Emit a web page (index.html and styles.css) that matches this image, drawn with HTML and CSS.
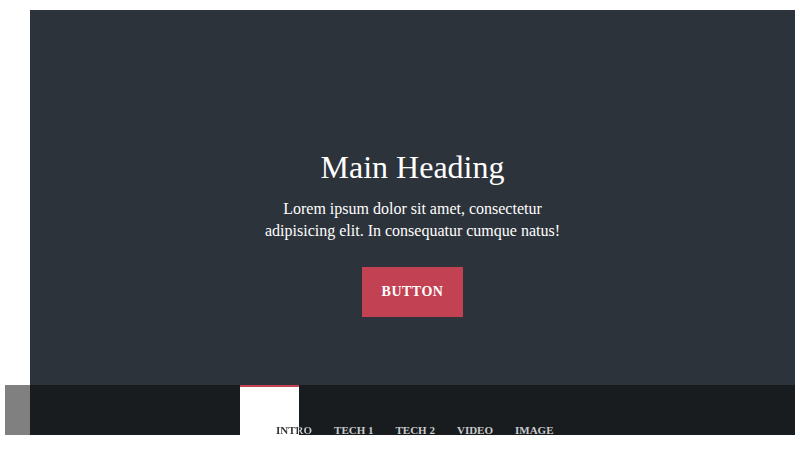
FILE: index.html
```html
<!DOCTYPE html>
<html lang="en">

<head>
    <meta charset="UTF-8">
    <meta name="viewport" content="width=device-width, initial-scale=1.0">
    <title>Main Heading</title>
    <link rel="stylesheet" href="styles.css">
</head>

<body>
    <div class="page">
        <section class="hero">
            <h1>Main Heading</h1>
            <p>Lorem ipsum dolor sit amet, consectetur adipisicing elit. In consequatur cumque natus!</p>
            <a class="btn" href="#">Button</a>
        </section>

        <nav class="tabs">
            <div class="tabs-side"></div>
            <ul class="tabs-bar">
                <li class="tab active"><a href="#intro">Intro</a></li>
                <li class="tab"><a href="#tech1">Tech 1</a></li>
                <li class="tab"><a href="#tech2">Tech 2</a></li>
                <li class="tab"><a href="#video">Video</a></li>
                <li class="tab"><a href="#image">Image</a></li>
            </ul>
        </nav>
    </div>
</body>

</html>
```

FILE: styles.css
```css
html,
body {
    margin: 0;
    padding: 0;
    background: #fff;
}

body {
    font-family: "Liberation Serif", "Times New Roman", serif;
}

.page {
    margin: 10px 5px 0 5px;
}

.hero {
    display: flex;
    flex-direction: column;
    align-items: center;
    box-sizing: border-box;
    height: 375px;
    margin-left: 25px;
    padding-top: 137px;
    background: #2d333b;
    color: #fff;
    text-align: center;
}

.hero h1 {
    margin: 0;
    font-size: 32px;
    font-weight: normal;
    line-height: 40px;
}

.hero p {
    max-width: 320px;
    margin: 11px 0 0;
    font-size: 16px;
    line-height: 22px;
}

.btn {
    margin-top: 25px;
    padding: 16px 19.5px;
    background: #c24152;
    color: #fff;
    font-size: 14px;
    font-weight: bold;
    line-height: 18px;
    letter-spacing: 0.5px;
    text-transform: uppercase;
    text-decoration: none;
}

.tabs {
    display: flex;
    height: 50px;
    overflow: hidden;
}

.tabs-side {
    width: 25px;
    background: #808080;
}

.tabs-bar {
    display: flex;
    flex: 1;
    margin: 0;
    padding: 0 0 0 235px;
    list-style: none;
    background: #191c1f;
}

.tab {
    position: relative;
    padding: 41px 11px 0;
}

.tab a {
    position: relative;
    display: block;
    color: #c9cbce;
    font-size: 11px;
    font-weight: bold;
    line-height: 9px;
    text-transform: uppercase;
    text-decoration: none;
}

/* indicator sits 25px left of its label */
.tab.active::before {
    content: "";
    position: absolute;
    top: 0;
    bottom: 0;
    left: -25px;
    width: 59px;
    border-top: 2px solid #c24152;
    background: #fff;
}

.tab.active a {
    background: linear-gradient(to right, #333 22px, #c9cbce 22px);
    -webkit-background-clip: text;
    background-clip: text;
    color: transparent;
}
```
